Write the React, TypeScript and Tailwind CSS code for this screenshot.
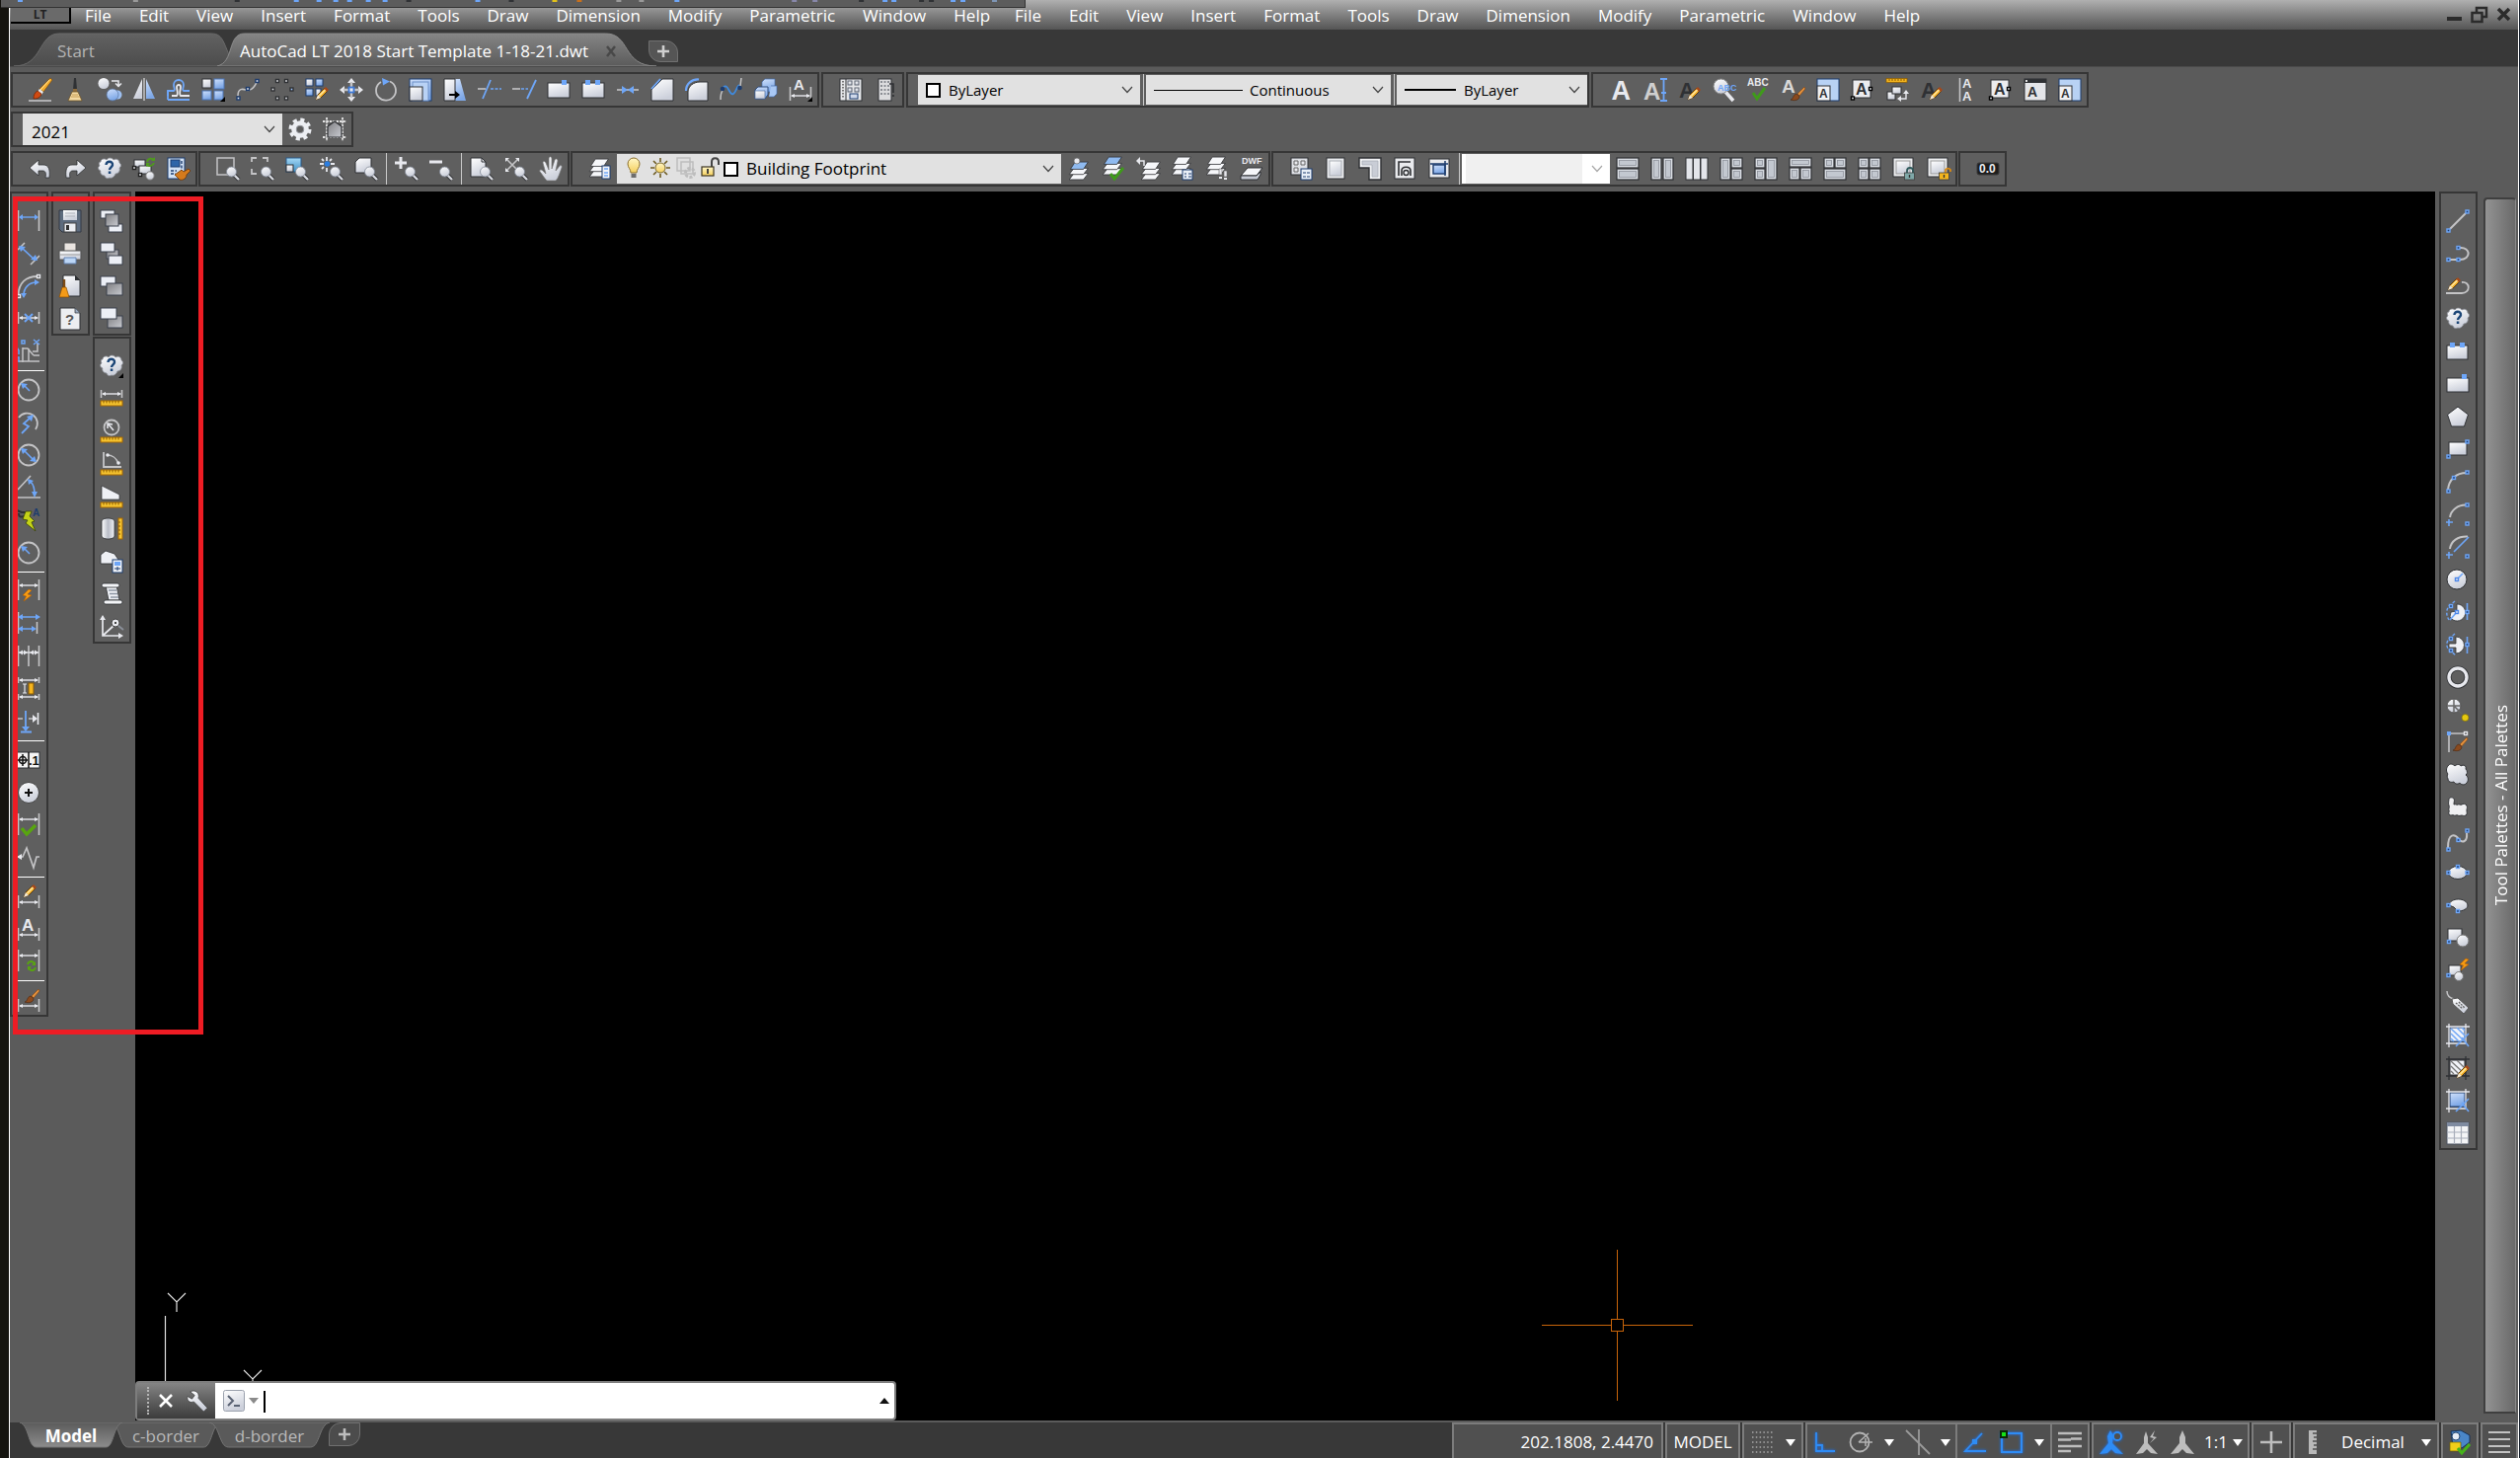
import React, { type ReactNode } from "react";

const W = "#e8e9ee";
const G = "#c4c4c6";
const B = "#6ea6f8";
const N = "#1d3c6e";
const K = "#2f3134";
const GW = "url(#gw)";
const GB = "url(#gb)";
const GY = "url(#gy)";

/* ---------- shared drawing parts (24 x 24 grid) ---------- */

const Box = ({ x, y, w, h, f = GW, s = K }: { x: number; y: number; w: number; h: number; f?: string; s?: string }) => (
  <rect x={x} y={y} width={w} height={h} fill={f} stroke={s} />
);
const Line = ({ d, s = G, w = 2 }: { d: string; s?: string; w?: number }) => (
  <path d={d} fill="none" stroke={s} strokeWidth={w} />
);
const Node = ({ x, y, s = B, f = N }: { x: number; y: number; s?: string; f?: string }) => (
  <rect x={x - 1.5} y={y - 1.5} width={3} height={3} fill={f} stroke={s} strokeWidth={1.4} />
);
const Mag = () => (
  <g>
    <path d="M18 18l5 5" stroke={K} strokeWidth={4} />
    <path d="M18 18l5 5" stroke="#d7d9df" strokeWidth={2.4} />
    <circle cx={15.5} cy={15} r={5} fill={GW} stroke="#7f8794" strokeWidth={0.8} />
  </g>
);
const Ruler = ({ y = 16 }: { y?: number }) => (
  <g>
    <rect x={1} y={y} width={22} height={5} fill="#f6c430" stroke="#a96a00" />
    <path d={`M4 ${y}v2.500M7 ${y}v2.500M10 ${y}v2.500M13 ${y}v2.500M16 ${y}v2.500M19 ${y}v2.500`} stroke="#8a5a00" />
  </g>
);
const Pencil = ({ x = 0, y = 0 }: { x?: number; y?: number }) => (
  <g transform={`translate(${x} ${y})`}>
    <path d="M1 13l2-5 7-7 3 3-7 7z" fill="#f7b52c" stroke="#5a3a14" />
    <path d="M9 2l2-2 3 3-2 2z" fill="#a5481a" />
    <path d="M1 13l2-5 3 3z" fill="#f2ead8" />
    <path d="M4.500 9l6-6" stroke="#ffe9a8" strokeWidth={1.2} />
  </g>
);
const Brush = ({ x = 0, y = 0 }: { x?: number; y?: number }) => (
  <g transform={`translate(${x} ${y})`}>
    <path d="M14 0l-7 7 2 2 6-7z" fill="#e3903c" stroke="#7d4313" strokeWidth={0.6} />
    <path d="M0 13c3 0 2-5 6-6l3 2.500c0 4-5 5-9 3.500z" fill="#8a4a1e" stroke="#4c250b" strokeWidth={0.6} />
  </g>
);
const Cloud = () => (
  <g>
    <path d="M3 5c0-3 4-4 6-2 2-3 6-2 7 0 3-2 6 0 6 3 2 1 2 4 0 5 1 3-1 6-4 6-1 3-4 5-6 4-2 1-4 1-5-2-3 0-5-3-4-5-3-1-3-4-1-5-1-2-1-4 1-4z" fill={GW} stroke="#8e929b" strokeWidth={0.800} />
    <path d="M8.500 8c0-4.500 7-4 6.500 0-.3 2.300-2.900 2.400-3 5" fill="none" stroke="#1c4677" strokeWidth={2.400} />
    <rect x={10.800} y={14.500} width={2.500} height={2.500} fill="#1c4677" />
  </g>
);
const Bolt = ({ x = 0, y = 0, f = "#f59a12" }: { x?: number; y?: number; f?: string }) => (
  <path transform={`translate(${x} ${y})`} d="M7 0L1 6l3.500 1L2 12l8-6-4-1 4-4z" fill={f} stroke="#b65d00" strokeWidth={0.6} />
);
const Dim = ({ y = 6, top = 1, h = 12, s = G, a = W, r = 2 }: { y?: number; top?: number; h?: number; s?: string; a?: string; r?: number }) => (
  <g>
    <path d={`M1.500 ${top}v${h}M22.500 ${top}v${h}`} stroke={s} strokeWidth={1.6} />
    <path d={`M3 ${y}H21`} stroke={a} strokeWidth={1.4} />
    <path d={`M2 ${y}l4-${r}v${r * 2}zM22 ${y}l-4-${r}v${r * 2}z`} fill={a} />
  </g>
);
const Layers = ({ x = 0, y = 0, top = "#f6f7fa" }: { x?: number; y?: number; top?: string }) => (
  <g transform={`translate(${x} ${y}) scale(1.2 1.05)`} stroke={K} strokeWidth={0.7}>
    <path d="M5 13h12l-4 6H1z" fill="#f6f7fa" />
    <path d="M5 8h12l-4 6H1z" fill="#f6f7fa" />
    <path d="M6 2h11l-4 7H2z" fill={top} />
  </g>
);
const T = ({ x, y, size, f = W, children }: { x: number; y: number; size: number; f?: string; children: ReactNode }) => (
  <text x={x} y={y} fontSize={size} fontWeight={700} fill={f} fontFamily="Liberation Sans, sans-serif">{children}</text>
);
const Card = ({ x, y, w = 12, h = 9, f = "#eceff6" }: { x: number; y: number; w?: number; h?: number; f?: string }) => (
  <rect x={x} y={y} width={w} height={h} fill={f} stroke="#3b414c" />
);
const Pane = ({ x, y, w, h }: { x: number; y: number; w: number; h: number }) => (
  <g>
    <rect x={x} y={y} width={w} height={h} fill="#d9dde3" stroke={K} strokeWidth={1.2} />
    <rect x={x + 2.5} y={y + 2.5} width={w - 5} height={h - 5} fill="#c3c8d0" stroke="#8d929b" strokeWidth={0.8} />
  </g>
);
const Lock = ({ body, open }: { body: string; open?: boolean }) => (
  <g>
    <path d={open ? "M19 16v-3a3 3 0 0 1 5 0v2" : "M15 17v-3a3 3 0 0 1 6 0v3"} fill="none" stroke={open ? "#d98a14" : "#2f5a5c"} strokeWidth={1.8} />
    <rect x={12.500} y={16} width={10} height={7} fill={body} stroke="#3d3d3d" strokeWidth={0.8} />
    <path d="M17.500 18v3" stroke="#333" strokeWidth={1.4} />
  </g>
);

/* ---------- icon drawings ---------- */

const icons: Record<string, ReactNode> = {
  erase: <><Line d="M0 23H23" w={1.600} /><path d="M22 0l2 2-9 12-4-3z" fill="#f4ad2d" stroke="#7b4a10" strokeWidth={0.700} /><path d="M21 2l-9 10" stroke="#ffe7a0" /><path d="M11 11l4 3-2 3-4-3z" fill="#e9e9e9" /><path d="M9 13l4 3c-1 4-4 5-8 5 0-4 1-6 4-8z" fill="#cf4a12" stroke="#6e1f00" strokeWidth={0.700} /></>,
  purge: <><path d="M11 0h2l1 12h-4z" fill={K} /><path d="M10 11h4v4h-4z" fill="#8c6a3c" /><path d="M9 14h6l4 9H5z" fill="#f3d9a2" stroke="#6d5327" strokeWidth={0.800} /><path d="M9 17h6M8 19h9" stroke="#c79d55" /></>,
  copy: <><circle cx={6} cy={5.500} r={5.500} fill={GW} /><path d="M14 3h7v5M18 5.500l3 3 3-3" fill="none" stroke={W} strokeWidth={1.500} /><circle cx={20} cy={17} r={4.500} fill="#9dbff0" /><circle cx={15} cy={17} r={6} fill={GB} stroke="#54719e" strokeWidth={0.700} /></>,
  mirror: <><path d="M10 1v20H1z" fill={GW} /><path d="M14 1v20h9z" fill={GB} /><path d="M12 0v23" stroke={G} strokeWidth={1.500} /></>,
  offset: <><path d="M1 22h22M1 18v-5h6c2-1 0-3 0-6a5 5 0 0 1 10 0c0 3-2 5 0 6h6" fill="none" stroke={B} strokeWidth={1.800} /><path d="M1 13v9" stroke={B} strokeWidth={1.800} /><path d="M5 18h5c2-2 0-6 0-9a2 2 0 0 1 4 0c0 3-2 7 0 9h9" fill="none" stroke={W} strokeWidth={1.800} /></>,
  array: <><Box x={1} y={1} w={9} h={9} /><Box x={13} y={1} w={10} h={10} f={GB} s="#4c76b8" /><Box x={1} y={13} w={9} h={9} f={GB} s="#4c76b8" /><Box x={13} y={13} w={9} h={9} f={GB} s="#4c76b8" /><path d="M24 19v5h-5z" fill="#000" /></>,
  arraypath: <><Line d="M2 18c0-8 5-7 8-6s8 0 11-8" w={1.600} /><Node x={2.500} y={20.500} f={W} s={N} /><Node x={12} y={11} f={W} s={N} /><Node x={21.500} y={3} f={W} s={N} /></>,
  arraypolar: <><Node x={7} y={3} f={W} s={K} /><Node x={16} y={3} f={W} s={K} /><Node x={2.500} y={11.500} f={W} s={K} /><Node x={21.500} y={11.500} f="#9cc4ff" s={K} /><Node x={7} y={20.500} f={W} s={K} /><Node x={16} y={20.500} f={W} s={K} /></>,
  arrayedit: <><Box x={1} y={1} w={7} h={7} s={N} /><Box x={11} y={1} w={7} h={7} f={GB} s={N} /><Box x={1} y={11} w={7} h={7} f={GB} s={N} /><Box x={11} y={11} w={5} h={7} s={N} /><Pencil x={10} y={9} /></>,
  move: <><path d="M12 0l4 5h-8zM12 24l4-5h-8zM0 12l5-4v8zM24 12l-5-4v8z" fill={W} /><path d="M12 4v16M4 12h16" stroke={G} strokeWidth={2.500} /><rect x={9.500} y={9.500} width={5} height={5} fill={W} stroke="#3d78d6" strokeWidth={1.800} /></>,
  rotate: <><path d="M7 4a10 10 0 1 0 9-.500" fill="none" stroke={G} strokeWidth={1.800} /><path d="M8 0l8 3.500-7 4z" fill={B} /></>,
  scale: <><Box x={1} y={1} w={22} h={22} f={GB} s={N} /><Box x={4} y={4} w={16} h={19} f="#b9d2f5" s="#6c8fc6" /><Box x={1} y={9} w={13} h={14} f={GW} /></>,
  stretch: <><path d="M12 1h5l6 22H12z" fill={GB} /><path d="M1 1h11v22H1z" fill={GW} stroke={K} /><path d="M6 17h9" stroke="#000" strokeWidth={2} /><path d="M17 17l-5-4v8z" fill="#000" /></>,
  trim: <><Line d="M0 11h8" w={1.600} /><path d="M5 21L13 2" stroke={B} strokeWidth={1.800} /><path d="M13 11h11" stroke={B} strokeWidth={1.600} strokeDasharray="3 1.500" /></>,
  extend: <><Line d="M0 11h8" w={1.600} /><path d="M9 11h7" stroke={B} strokeWidth={1.600} strokeDasharray="3 1.500" /><path d="M15 21L24 2" stroke={B} strokeWidth={1.800} /></>,
  breakpoint: <><Box x={1} y={5} w={22} h={15} /><rect x={15} y={2} width={5} height={5} fill={B} /></>,
  break: <><Box x={1} y={5} w={22} h={15} /><rect x={4} y={2} width={5} height={5} fill={B} /><rect x={14} y={2} width={5} height={5} fill={B} /></>,
  join: <><path d="M1 12h22" stroke={G} strokeWidth={1.600} /><path d="M6 8l6 4-6 4zM18 8l-6 4 6 4z" fill={B} /></>,
  chamfer: <><path d="M1 23V12L12 1h11v22z" fill={GW} stroke={K} /><path d="M1 11L10 1" stroke={B} strokeWidth={1.800} /></>,
  fillet: <><path d="M3 23V14C3 8 9 4 15 4h8v19z" fill={GW} stroke={K} /><path d="M1 13C1 6 7 1 14 1.500" fill="none" stroke={B} strokeWidth={2.200} /></>,
  blend: <><Line d="M1 22c0-5 1-8 2-9" w={1.500} /><path d="M3 11c5-9 7 8 11 5 3-2 3-7 6-9" fill="none" stroke="#3f8be0" strokeWidth={1.800} /><Line d="M21 8l1-8" w={1.500} /><circle cx={3} cy={11} r={2.300} fill={N} /><circle cx={20.500} cy={10} r={2.300} fill={N} /></>,
  explode: <><path d="M8 4l3-3h10v10l-3 3H8z" fill={GB} stroke="#466fae" strokeWidth={0.700} /><path d="M1 12l3-3h10v8l-3 4H1z" fill={GB} stroke="#2e4c7c" /><path d="M1 13h10v8H1z" fill={GW} stroke="#54719e" strokeWidth={0.700} /><path d="M17 8h6v8l-3 3h-5" fill="#a9c8f4" stroke="#466fae" strokeWidth={0.700} /></>,
  dimtext: <><T x={5} y={12} size={15}>A</T><Dim y={18} top={9} h={14} /><path d="M24 19v5h-5z" fill="#000" /></>,
  sheet: <><Box x={1} y={1} w={22} h={22} f="#e6e7ea" /><path d="M4 3v18" stroke="#777" strokeDasharray="1.500 1.500" strokeWidth={2} /><path d="M7 1v22" stroke={K} /><Box x={9} y={3} w={4} h={4} s="#5b6370" /><Box x={16} y={3} w={4} h={4} s="#5b6370" /><Box x={9} y={10} w={4} h={4} s="#5b6370" /><Box x={16} y={10} w={4} h={4} s="#5b6370" /><Box x={11} y={16} w={8} h={5} s={N} f="#cfd8ea" /></>,
  sheet2: <><Box x={5} y={1} w={13} h={22} f="#dcdcde" /><path d="M7 4h9M7 8h9M7 12h9M7 16h9" stroke="#8b8e94" strokeWidth={2} strokeDasharray="2 1.500" /><path d="M16 6h4v9M20 17v2" stroke={K} fill="none" strokeWidth={1.600} /></>,
  textA: <T x={2.500} y={22} size={27}>A</T>,
  textI: <><T x={0} y={22} size={24} f="#cfcfcf">A</T><path d="M20.500 1v22M17 1h7M17 23h7M18 15h5" stroke={B} strokeWidth={1.800} /></>,
  textedit: <><T x={1} y={20} size={22} f={K}>A</T><Pencil x={9} y={9} /></>,
  find: <><path d="M13 14l8 9" stroke={W} strokeWidth={3.500} /><circle cx={8.500} cy={8.500} r={7.500} fill={GW} stroke="#888" /><T x={5} y={13} size={9} f={B}>ABC</T></>,
  spell: <><T x={0} y={8} size={10}>ABC</T><path d="M6 15l4 6 8-11" fill="none" stroke="#3f9a1b" strokeWidth={3} /></>,
  style: <><T x={0} y={15} size={19} f="#d8d8d8">A</T><Brush x={9} y={9} /></>,
  textscale: <><Box x={1} y={1} w={22} h={22} f="#b8d2f4" s={N} /><Box x={1} y={8} w={13} h={15} f="#f0f1f3" /><T x={3} y={20} size={12} f={K}>A</T></>,
  justify: <><Box x={2} y={2} w={18} h={18} f="#ececef" /><T x={5} y={17} size={16} f={K}>A</T><Node x={2} y={20.500} s="#000" f={W} /><Node x={20} y={11} s="#000" f={W} /></>,
  convert: <><rect x={1} y={0.500} width={21} height={4} fill="#f3b51e" stroke="#8a5a00" strokeWidth={0.700} /><path d="M4 1v2M7 1v2M10 1v2M13 1v2M16 1v2M19 1v2" stroke="#8a5a00" /><Box x={2} y={14} w={8} h={8} /><Box x={7} y={9} w={9} h={7} /><path d="M15 21h6v-6" fill="none" stroke={W} strokeWidth={1.400} /><path d="M21 12l-3 4h6zM12 21l4-3v6z" fill={W} /></>,
  columnA: <><path d="M5.500 0v24" stroke={G} strokeWidth={1.600} /><T x={8} y={10} size={13}>A</T><T x={8} y={23} size={13}>A</T></>,
  windowA: <><Box x={1} y={1} w={22} h={22} f="#e4e5e8" /><rect x={1} y={1} width={22} height={4} fill={K} /><rect x={2} y={2} width={2} height={2} fill="#ddd" /><T x={4} y={19} size={14} f={K}>A</T></>,
  gear: <><circle cx={12} cy={12} r={9.500} fill="none" stroke="#eceef2" strokeWidth={4} strokeDasharray="4 3.460" /><circle cx={12} cy={12} r={6.300} fill="none" stroke="#eceef2" strokeWidth={5} /><circle cx={12} cy={12} r={3.800} fill="#5b5b5b" stroke="#9a9da4" /></>,
  wsbox: <><path d="M4 0v24M20 0v24M0 4h24M0 20h24" stroke="#e4e4e4" strokeWidth={1.800} strokeDasharray="2.400 1" /><path d="M5 20V9l7-5 7 5v11z" fill="url(#gg)" stroke={K} strokeWidth={1.200} /></>,
  undo: <path d="M1 11l9-8v5h5c5 0 7 4 6 13h-4c1-5 0-7-3-7h-4v5z" fill={GW} stroke={K} strokeWidth={0.800} />,
  redo: <path d="M23 11l-9-8v5H9c-5 0-7 4-6 13h4c-1-5 0-7 3-7h4v5z" fill={GW} stroke={K} strokeWidth={0.800} />,
  cloud: <Cloud />,
  cloudmore: <><Cloud /><path d="M24 19v5h-5z" fill="#000" /></>,
  refresh: <><Box x={2} y={3} w={11} h={7} /><Box x={7} y={9} w={12} h={8} /><circle cx={18} cy={19} r={4.200} fill={GW} stroke="#777" /><Node x={2} y={11} f={W} s="#222" /><Node x={8} y={18} f={W} s="#222" /><path d="M15 5c1-4 5-4 7-2M22 6c-1 3-5 4-7 2" fill="none" stroke="#4f9c1c" strokeWidth={1.800} /><path d="M23 0v4h-4zM14 10V6h4z" fill="#4f9c1c" /></>,
  properties: <><Box x={1} y={1} w={17} h={21} f="#d3e2f5" s={N} /><rect x={4} y={3} width={9} height={7} fill="#2e65a8" stroke={N} /><path d="M15 4v12M4 14h6M4 17h5" stroke={N} strokeWidth={1.400} strokeDasharray="3 1.500" /><path d="M8 18l7-5 2 2 5-3 2 2-4 4c0 4-4 6-7 5z" fill="#d47a1c" stroke="#6c3505" strokeWidth={0.800} /></>,
  zoomwin: <><Line d="M1 1h17v17H1z" w={1.500} /><Mag /></>,
  zoomdyn: <><Line d="M1 5V1h5M12 1h5v4M1 12v5h5" w={1.800} /><Mag /></>,
  zoomscale: <><Box x={1} y={1} w={15} h={14} f="url(#gs)" s="#2b5a8a" /><Box x={1} y={8} w={7} h={7} /><Mag /></>,
  zoomcenter: <><path d="M7 0v4M7 11v4M0 7h4M11 7h4M2 2l2 2M12 2l-2 2M2 12l2-2" stroke={W} strokeWidth={1.800} /><circle cx={7.500} cy={7} r={2.800} fill="#2a7de0" /><Mag /></>,
  zoomobj: <><path d="M1 5l4-4h12v11l-4 4H1z" fill={GW} stroke={K} /><Mag /></>,
  zoomin: <><path d="M6 0v12M0 6h12" stroke={W} strokeWidth={3} /><Mag /></>,
  zoomout: <><path d="M0 5h13" stroke={W} strokeWidth={3} /><Mag /></>,
  zoomall: <><path d="M1 1h11l4 4v15H1z" fill={GW} stroke={K} /><path d="M12 1v4h4" fill="none" stroke={K} /><Mag /></>,
  zoomext: <><path d="M2 2l12 12M14 2L2 14" stroke={G} strokeWidth={1.600} /><path d="M1 1h4l-4 4zM15 1h-4l4 4zM1 15v-4l4 4z" fill={W} /><Mag /></>,
  pan: <path d="M8 24c-3-3-5-7-7-9-1-2 1-3 3-1l3 3-3-11c0-2 2-2 3 0l3 7V2c0-3 3-3 3 0v10l3-9c1-2 3-1 3 1l-2 10 4-5c1-1 3 0 2 2-2 5-3 10-6 13z" fill={GW} stroke="#777" strokeWidth={0.700} />,
  layerprops: <><Layers x={0} y={0} /><Box x={14} y={9} w={8} h={13} f="#f1f3f8" s={N} /><path d="M16 12h4M16 16h4M16 19h4" stroke={B} strokeWidth={1.600} /></>,
  layercur: <><Layers x={1} y={3} top="#8fbaf0" /><circle cx={10} cy={4} r={3} fill={W} stroke="#666" strokeWidth={0.700} /></>,
  layerok: <><Layers x={0} y={-2} top="#8fbaf0" /><path d="M9 17l4 5 9-11" fill="none" stroke="#3f9a1b" strokeWidth={3} /></>,
  layerprev: <><Layers x={4} y={3} /><path d="M3 4h5v5" fill="none" stroke={W} strokeWidth={1.500} /><path d="M0 4l4-4v8z" fill={W} /></>,
  layerstate: <><Layers x={0} y={-2} /><Box x={12} y={13} w={10} h={10} f="#e9eef6" s={N} /><path d="M14 17h2M18 17h3M14 20h2M18 20h3" stroke={N} /></>,
  layerwalk: <><Layers x={0} y={-2} /><path d="M14 12h3v6h-3zM19 14h3v6h-3z" fill={W} stroke="#666" strokeWidth={0.600} /><path d="M14 20h3v2h-3zM19 21h3v2h-3z" fill={W} /></>,
  dwf: <><T x={2} y={7} size={9}>DWF</T><path d="M8 11h15l-6 8H1z" fill="#f6f7fa" stroke={K} /><path d="M1 19h16l4-4v3l-3 5H1z" fill="#c6cad4" stroke={K} /></>,
  vpdialog: <><Box x={2} y={1} w={17} h={17} f="#dfe1e6" /><path d="M5 4h4v4H5zM12 4h4v4h-4zM5 11h4v4H5z" fill={W} stroke="#666" /><Box x={12} y={12} w={11} h={11} f="#eaf0f8" s={N} /><path d="M14 16h3M18 16h3M14 20h3M18 20h3" stroke={N} /></>,
  vpsingle: <><Box x={3} y={1} w={18} h={21} f="#e9eaed" /><rect x={6} y={4} width={12} height={15} fill={GW} stroke="#a9adb5" /></>,
  vppoly: <><path d="M1 1h22v22H11V11H1z" fill="#f0f1f4" stroke={K} strokeWidth={1.400} /><path d="M4 4h16v16h-6V8H4z" fill="#c9cdd6" stroke="#a4a9b3" strokeWidth={0.700} /></>,
  vpobject: <><Box x={2} y={1} w={20} h={21} f="#e9eaed" /><path d="M6 19V5h12M9 19v-5c0-5 9-5 9 0v5" fill="none" stroke={K} strokeWidth={1.600} /><circle cx={13.500} cy={16} r={2.500} fill="none" stroke={K} strokeWidth={1.400} /></>,
  vpclip: <><Box x={2} y={2} w={20} h={19} f="#e9eaed" /><rect x={6} y={8} width={12} height={9} fill={GB} stroke={N} strokeWidth={1.400} /><path d="M3 7h18M18 4v15" stroke={N} strokeWidth={1.500} /></>,
  vp2h: <><Pane x={1} y={1} w={22} h={10} /><Pane x={1} y={12} w={22} h={11} /></>,
  vp2v: <><Pane x={1} y={1} w={10} h={22} /><Pane x={13} y={1} w={10} h={22} /></>,
  vp3v: <><Box x={1} y={1} w={7} h={22} f="#e3e5ea" /><Box x={8.500} y={1} w={7} h={22} f="#e3e5ea" /><Box x={16} y={1} w={7} h={22} f="#e3e5ea" /></>,
  vp3l: <><Pane x={1} y={1} w={10} h={22} /><Pane x={12} y={1} w={11} h={10} /><Pane x={12} y={12} w={11} h={11} /></>,
  vp3r: <><Pane x={1} y={1} w={10} h={10} /><Pane x={1} y={12} w={10} h={11} /><Pane x={12} y={1} w={11} h={22} /></>,
  vp3t: <><Pane x={1} y={1} w={22} h={9} /><Pane x={1} y={11} w={10} h={12} /><Pane x={12} y={11} w={11} h={12} /></>,
  vp3b: <><Pane x={1} y={1} w={10} h={10} /><Pane x={12} y={1} w={11} h={10} /><Pane x={1} y={12} w={22} h={11} /></>,
  vp4: <><Pane x={1} y={1} w={10} h={10} /><Pane x={12} y={1} w={11} h={10} /><Pane x={1} y={12} w={10} h={11} /><Pane x={12} y={12} w={11} h={11} /></>,
  vplock: <><Box x={1} y={1} w={20} h={19} f="#edeef0" /><rect x={4} y={4} width={14} height={13} fill={GW} stroke="#999" /><Lock body="#7fa8a8" /></>,
  vpunlock: <><Box x={1} y={1} w={20} h={19} f="#edeef0" /><rect x={4} y={4} width={14} height={13} fill={GW} stroke="#999" /><Lock body="#f3b51e" open /></>,
  zerozero: <><rect x={1} y={6} width={22} height={12} rx={2} fill="#1d1d1d" stroke="#3a3a3a" /><T x={3} y={16} size={12}>0.0</T></>,

  dimlinear: <Dim y={8} top={1} h={21} a={B} r={3} />,
  dimaligned: <><path d="M1 8l7-7M14 23l9-9" stroke={G} strokeWidth={1.600} /><path d="M4 5l15 14" stroke={B} strokeWidth={1.600} /><path d="M2 4l7 1-5 5zM21 19l-7-1 5-5z" fill={B} /></>,
  dimarc: <><Line d="M1.500 21C2 9 9 2 21 2" w={1.800} /><path d="M7 21C7 14 12 8 20 8" fill="none" stroke={B} strokeWidth={1.600} /><path d="M23 8l-5-3v6zM7 24l-3-5h6z" fill={B} /><Node x={22} y={2} s={W} f="#555" /><Node x={2} y={22} s={W} f="#555" /></>,
  dimordinate: <><Dim y={11} top={5} h={12} /><path d="M8 7l8 8M16 7l-8 8" stroke={B} strokeWidth={2} /></>,
  dimjogged: <><path d="M6 8v15M2 22h21M6 9h5l6 7M12 9v13M17 16h6M16 12h5V3" fill="none" stroke={G} strokeWidth={1.500} /><path d="M5 1h3v3H5zM0 8l2 3v4M17 0l6 5M23 0l-6 5M0 18h2v4H0z" fill="none" stroke={B} strokeWidth={1.500} /></>,
  dimradius: <><circle cx={12} cy={12} r={10.500} fill="none" stroke={G} strokeWidth={1.800} /><path d="M13 13L7 7" stroke={B} strokeWidth={1.600} /><path d="M4 5l7 1-5 5z" fill={B} /></>,
  dimjog: <><path d="M2 7a10 10 0 1 1 17 12" fill="none" stroke={G} strokeWidth={1.800} /><path d="M5 23l7-7-5-3 8-7" fill="none" stroke={B} strokeWidth={1.800} /><path d="M17 4l-7 2 5 5z" fill={B} /></>,
  dimdiameter: <><circle cx={12} cy={12} r={10.500} fill="none" stroke={G} strokeWidth={1.800} /><path d="M6 6l12 12" stroke={B} strokeWidth={1.600} /><path d="M4 5l7 1-5 5zM20 19l-7-1 5-5z" fill={B} /></>,
  dimangle: <><Line d="M14 0L1 14M0 22H24" w={1.600} /><path d="M14 6c3 3 4 7 4 12" fill="none" stroke={B} strokeWidth={1.600} /><path d="M11 3l6 2-5 4zM18 22l-3-6h6z" fill={B} /></>,
  quickdim: <><path d="M0 2l5 2h8M2 5c0 4 2 4 5 3" stroke={K} fill="none" strokeWidth={2} /><path d="M9 3L6 11l5 1-2 3 10 8-4-9 3-1-5-5 2-5z" fill="#c5d317" stroke="#39420a" strokeWidth={0.800} /><T x={16} y={8} size={10} f={N}>A</T></>,
  dimcont: <><Dim y={6} top={0} h={21} /><Bolt x={5} y={10} /></>,
  dimbase: <><path d="M1.500 0v22M20.500 10v12" stroke={G} strokeWidth={1.600} /><path d="M2 5h20M2 17h16" stroke={B} strokeWidth={1.600} /><path d="M24 5l-5-3v6zM1 5l5-3v6zM20 17l-5-3v6zM1 17l5-3v6z" fill={B} /></>,
  dimcontinue: <><path d="M1.500 1v21M12 1v21M22.500 1v21" stroke={G} strokeWidth={1.600} /><path d="M2 8h20" stroke={W} strokeWidth={1.200} /><path d="M2 8l4-2.500v5zM11 8L7 5.500v5zM13 8l4-2.500v5zM22 8l-4-2.500v5z" fill={W} /></>,
  dimspace: <><Dim y={3} top={0} h={6} /><Dim y={20} top={17} h={6} /><path d="M8 7v9M6 7h4M6 16h4" stroke={W} strokeWidth={1.200} /><rect x={12} y={6} width={5} height={11} fill="#f6b51e" stroke="#8a5a00" /></>,
  dimbreak: <><path d="M0 9h6M12 9h8" stroke={G} strokeWidth={1.600} /><path d="M21.500 3v12" stroke={W} strokeWidth={1.600} /><path d="M21 9l-5-4v8z" fill={W} /><path d="M9 1v20M4 22.500h11" stroke={B} strokeWidth={1.800} /><path d="M9 22l-4-5h8z" fill={B} /></>,
  tolerance: <><rect x={0} y={4} width={23} height={16} fill="#f4f4f4" stroke={K} /><path d="M12 4v16M6 6v12M1 12h10" stroke="#111" strokeWidth={1.500} /><circle cx={6} cy={12} r={3.500} fill="none" stroke="#111" strokeWidth={1.500} /><T x={12} y={17} size={13} f="#111">.1</T></>,
  centermark: <><circle cx={12} cy={12} r={10.500} fill={GW} stroke="#444" /><path d="M12 8v8M8 12h8" stroke="#111" strokeWidth={2} /></>,
  inspect: <><Dim y={6} top={0} h={22} /><path d="M5 15l5 6 9-9" fill="none" stroke="#58a50f" strokeWidth={3.500} /></>,
  jogline: <><Line d="M1 11h5l4-9 7 20 3-11h3" w={1.700} /><path d="M0 11l5-3v6z" fill={W} /></>,
  dimedit: <><Dim y={18} top={11} h={13} /><Pencil x={6} y={0} /></>,
  dimtextedit: <><T x={5} y={14} size={17}>A</T><Dim y={18} top={11} h={13} /></>,
  dimupdate: <><Dim y={6} top={0} h={22} /><path d="M11 15c1-4 6-4 7 0M19 18c-1 4-6 4-7 0" fill="none" stroke="#58a50f" strokeWidth={1.800} /><path d="M19 12v4h-4zM11 21v-4h4z" fill="#58a50f" /></>,
  dimstyle: <><Dim y={18} top={11} h={13} /><Brush x={8} y={1} /></>,

  save: <><path d="M1 1h22v22H4l-3-3z" fill="#5d6b7d" stroke="#343b46" /><rect x={5} y={1} width={14} height={10} fill={GW} /><path d="M7 4h10M7 7h10" stroke="#aeb2ba" /><rect x={6} y={14} width={12} height={9} fill="#eceef2" stroke="#444" /><rect x={8} y={16} width={3} height={5} fill="#333" /></>,
  print: <><path d="M6 1h12v9H6z" fill="#e9e4e0" stroke="#555" /><path d="M1 9h22v9H1z" fill={GW} stroke="#555" strokeWidth={1.200} /><path d="M2 13h20" stroke="#999" /><path d="M6 16h12v6H6z" fill="#bcd6f6" stroke="#6484b4" /></>,
  cleandoc: <><path d="M5 1h12l5 5v16H5z" fill={GW} stroke={K} /><path d="M17 1v5h5" fill={K} /><path d="M6 5v8" stroke="#7c4a14" strokeWidth={2.400} /><path d="M4 13h4l3 10H1z" fill="#f39a18" stroke="#8a4c00" strokeWidth={0.700} /></>,
  helpdoc: <><path d="M2 1h15l5 5v17H2z" fill="#eceef1" stroke={K} /><path d="M17 1v5h5" fill="#9aaabf" stroke={K} strokeWidth={0.700} /><T x={7} y={18} size={15} f="#555">?</T></>,
  front: <><Card x={1} y={1} w={14} h={8} /><Card x={9} y={15} w={14} h={8} /><Card x={6} y={5} w={13} h={12} f="url(#gg)" /></>,
  back: <><Card x={7} y={8} w={12} h={9} f="url(#gg)" /><Card x={1} y={1} w={14} h={9} /><Card x={9} y={14} w={14} h={9} /></>,
  above: <><Card x={1} y={2} w={15} h={10} /><Card x={7} y={9} w={16} h={12} f="url(#gg)" /></>,
  under: <><Card x={8} y={9} w={15} h={12} f="url(#gg)" /><Card x={1} y={1} w={16} h={11} /></>,
  distance: <><Dim y={7} top={3} h={8} a={W} /><Ruler y={14} /></>,
  radius: <><circle cx={12} cy={8} r={7.500} fill="none" stroke={G} strokeWidth={1.800} /><path d="M14 11L9 5M8 9V4l5 1" fill="none" stroke={W} strokeWidth={1.500} /><Ruler y={18} /></>,
  angle: <><Line d="M4 0v15h18" w={1.800} /><Line d="M7 3c7 0 10 3 12 9" w={1.500} /><circle cx={8} cy={3} r={1.800} fill={W} /><circle cx={19} cy={11} r={1.800} fill={W} /><Ruler y={18} /></>,
  area: <><path d="M2 1l18 9v5H2z" fill="#eef0f5" stroke={K} strokeWidth={0.700} /><Ruler y={18} /></>,
  volume: <><path d="M2 4c0-4 13-4 13 0v15c0 4-13 4-13 0z" fill="url(#gc)" stroke={K} strokeWidth={0.800} /><rect x={19} y={1} width={4} height={21} fill="#f6c430" stroke="#a96a00" /><path d="M19 5h2M19 9h2M19 13h2M19 17h2" stroke="#8a5a00" /></>,
  massprop: <><path d="M1 14V5l5-4 9 3 4 6v4z" fill="#eef0f5" stroke={K} strokeWidth={0.800} /><Box x={13} y={10} w={10} h={13} f="#eef1f6" s={N} /><rect x={15} y={12} width={6} height={4} fill={B} /><path d="M15 19h6M18 17v4" stroke={N} /></>,
  list: <><path d="M6 3h11l3 15H9z" fill="#eef0f5" stroke={K} strokeWidth={0.800} /><rect x={2} y={1} width={18} height={4} rx={2} fill="#f4f5f8" stroke={K} strokeWidth={0.800} /><rect x={4} y={18} width={19} height={4} rx={2} fill="#f4f5f8" stroke={K} strokeWidth={0.800} /><path d="M9 8h8M10 11.500h8M11 15h8" stroke="#8d95a3" strokeWidth={1.600} /></>,
  locate: <><path d="M3 2v19h18M3 21L15 10" fill="none" stroke={W} strokeWidth={1.700} /><path d="M3 0L0 5h6zM24 21l-5-3v6z" fill={W} /><circle cx={16} cy={8} r={4} fill={W} stroke="#444" /><rect x={15} y={7} width={2} height={2} fill="#444" /><path d="M19 11l5 4" stroke="#8a8f98" strokeWidth={2} /></>,

  line: <><Line d="M4 20L20 4" /><Node x={2.500} y={21.500} /><Node x={21.500} y={2.500} /></>,
  pline: <><Line d="M3 18h11c12 0 11-13 0-12" /><Node x={2.500} y={18} /><Node x={12.500} y={18} /><Node x={12.500} y={6} /></>,
  mline: <><Line d="M0 19h16c9 0 9-12 0-11" w={1.800} /><Pencil x={1} y={3} /></>,
  rect2: <><Box x={1} y={6} w={21} h={14} /><rect x={4} y={3} width={5} height={5} fill={B} /><rect x={14} y={3} width={5} height={5} fill={B} /></>,
  rect1: <><Box x={1} y={6} w={22} h={14} /><rect x={16} y={2} width={5} height={5} fill={B} /></>,
  polygon: <path d="M12 2l10.500 8-4 12H5.500l-4-12z" fill={GW} stroke={K} />,
  rectangle: <><Box x={3} y={5} w={18} h={13} /><Node x={2.500} y={19.500} /><Node x={21.500} y={4.500} /></>,
  arc: <><Line d="M2 20C3 10 10 3 21 3" /><Node x={2.500} y={21.500} /><Node x={8} y={8} /><Node x={21.500} y={2.500} /></>,
  arc2: <><Line d="M4 15C5 8 12 2 21 2.500" /><Node x={21.500} y={2.500} /><Node x={21.500} y={21.500} /><path d="M3 17v7M0 20h7" stroke={B} strokeWidth={1.600} /></>,
  arc3: <><Line d="M4 14C5 6 12 1 22 1.500" /><path d="M8 17L23 2M3 17v7M0 20h7" stroke={B} strokeWidth={1.600} /><Node x={21.500} y={21.500} /></>,
  circle: <><circle cx={11} cy={12} r={10} fill={GW} stroke={K} /><path d="M11 12l6-6" stroke={B} strokeWidth={1.600} /><Node x={11} y={12} s="#4b86e8" f={W} /></>,
  circle2: <><path d="M11 4a8.500 8.500 0 1 1-7 13l1-5 6-1z" fill="#eef0f5" stroke={K} strokeWidth={0.800} /><path d="M21.500 3v17M11 12l-7 8" fill="none" stroke={B} strokeWidth={1.600} /><path d="M9 1L3 6C0 10 0 15 3 20" fill="none" stroke={B} strokeWidth={1.400} strokeDasharray="3 2" /><Node x={21.500} y={12} /><Node x={5} y={6} /><Node x={11} y={12} f={W} s="#4b86e8" /></>,
  circle3: <><path d="M10 4a8.500 8.500 0 1 1 0 17v-6H3v-4h7z" fill="#eef0f5" stroke={K} strokeWidth={0.800} /><path d="M21.500 4v17" stroke={B} strokeWidth={1.600} /><path d="M9 1L3 6C0 10 0 15 4 18l6 5" fill="none" stroke={B} strokeWidth={1.400} strokeDasharray="3 2" /><Node x={21.500} y={12} /><Node x={5} y={6} /><Node x={5} y={18} /></>,
  donut: <><circle cx={12} cy={12} r={9} fill="none" stroke={K} strokeWidth={5} /><circle cx={12} cy={12} r={9} fill="none" stroke={W} strokeWidth={3.400} /></>,
  donutsnap: <><circle cx={8} cy={8} r={7} fill={GW} stroke="#555" /><path d="M8 1v14M1 8h14M9 9l7 7" stroke="#666" strokeWidth={1.500} /><circle cx={19.500} cy={20} r={3.500} fill="#e5c810" stroke="#7a6900" strokeWidth={0.600} /></>,
  region: <><Line d="M3 3h17M3 3v19" w={1.600} /><rect x={1} y={1} width={4} height={4} fill={B} /><Node x={20} y={3} s={W} f="#555" /><Brush x={7} y={7} /></>,
  revcloud: <path d="M2 3c2-3 5-2 7 0 2-2 5-2 6 0 3-2 6 0 5 3 2 2 2 5 0 6 3 2 3 6 1 8-2 3-6 2-7 0-2 2-5 1-6-1-3 1-6 0-6-3 -1-2-1-4 0-5-2-2-2-6 0-8z" fill={GW} stroke={K} />,
  wipeout: <path d="M3 3c2-2 4-1 5 0 1 2 0 3 0 6 2-1 3 1 4 0s3 1 4 0 4-1 5 1 0 3 0 5 1 4-1 5-3 0-4 0-3 1-4 0-3 1-4 0-4 1-5-1 1-3 0-4 1-3 0-5 0-5 0-7z" fill="#f0f0f2" stroke={K} />,
  spline: <><Line d="M2 20C2 4 9 6 13 11s9 2 8-6" /><Node x={2.500} y={21.500} /><Node x={12.500} y={12} /><Node x={21.500} y={2.500} /></>,
  ellipse: <><ellipse cx={12} cy={12} rx={9.500} ry={6.500} fill={GW} stroke={K} /><Node x={2.500} y={12} /><Node x={21.500} y={12} /><Node x={12} y={6} /></>,
  ellipsearc: <><path d="M3 12c1-8 18-8 19 0 0 4-5 6-10 6l-4-4z" fill={GW} stroke={K} /><Node x={2.500} y={12} /><Node x={12} y={18} /></>,
  block: <><Box x={2} y={3} w={14} h={12} /><circle cx={17} cy={15} r={6} fill={GW} stroke="#777" /><Node x={3} y={16} /></>,
  makeblock: <><Box x={3} y={7} w={12} h={10} /><circle cx={13} cy={18} r={4.500} fill={GW} stroke="#777" /><Node x={2.500} y={17} /><Bolt x={13} y={0} /></>,
  tag: <><Line d="M1 0c0 5 3 7 7 8" w={1.500} /><path d="M6 8l6-1 11 10-5 6L7 13z" fill={GW} stroke="#555" /><path d="M10 12l7 6M13 11l6 6" stroke="#666" strokeWidth={1.400} strokeDasharray="2 1" /></>,
  hatch: <><rect x={4} y={4} width={15} height={14} fill="#f1f3f8" stroke={N} /><path d="M5 5l13 12M5 10l8 8M11 4l8 8M5 15l3 3M16 4l3 3" stroke={B} strokeWidth={1.500} /><path d="M3 0v24M20 0v20M0 3h24M0 20h20" stroke={W} strokeWidth={1.300} /><path d="M10 23L23 10M16 14l7 9" stroke={B} strokeWidth={1.600} /></>,
  hatchedit: <><rect x={4} y={4} width={15} height={15} fill="#f1f3f8" stroke={K} /><path d="M5 5l13 12M5 10l8 8M11 4l8 8M5 15l3 3" stroke="#777" strokeWidth={1.300} /><path d="M3 0v24M20 0v24M0 3h24M0 20h24" stroke={K} strokeWidth={1.300} /><Pencil x={10} y={9} /></>,
  gradient: <><rect x={4} y={4} width={15} height={14} fill={GB} stroke={N} /><path d="M3 0v24M20 0v20M0 3h24M0 20h20" stroke={W} strokeWidth={1.300} /><path d="M10 23L23 10M16 14l7 9" stroke={B} strokeWidth={1.600} /></>,
  table: <><rect x={1} y={1} width={22} height={22} fill="#f3f4f6" stroke="#4d5563" /><rect x={1} y={1} width={22} height={4} fill="#7f8ba0" /><path d="M8.500 5v18M15.500 5v18M1 11h22M1 17h22" stroke="#a8aeba" strokeWidth={1.200} /></>,

  grid: <path d="M2 2h21M2 7h21M2 12h21M2 17h21M2 22h21" stroke="#a6a6a6" strokeWidth={1.500} strokeDasharray="1.500 2.300" />,
  ortho: <g filter="url(#glow)"><path d="M3 2v19h19M3 15h6v6" fill="none" stroke="#2d8cf5" strokeWidth={1.800} /></g>,
  polar: <><circle cx={11} cy={12} r={9.500} fill="none" stroke="#b2b2b2" strokeWidth={1.800} /><path d="M10 12h14M10 12l10-9M17 8v8" fill="none" stroke="#b2b2b2" strokeWidth={1.500} /></>,
  iso: <path d="M0 0l24 24M13 -1v26" stroke="#9a9a9a" strokeWidth={1.800} />,
  otrack: <g filter="url(#glow)"><path d="M19 3L2 21h21" fill="none" stroke="#2d8cf5" strokeWidth={1.800} /><path d="M9 9h5v5H9z" fill="#2d8cf5" /></g>,
  osnap: <><g filter="url(#glow)"><rect x={3} y={3} width={20} height={19} fill="none" stroke="#2d8cf5" strokeWidth={2} /></g><rect x={1} y={0} width={8} height={8} fill="#0a2a08" /><rect x={3} y={2} width={4} height={4} fill="#17e217" /></>,
  lineweight: <path d="M0 3h24M0 9.500h13M0 16h24M0 21h13M13 8.500h11" stroke="#bdbdbd" strokeWidth={2.400} />,
  anno: <g filter="url(#glow)"><path d="M11 0l3 5-1 8 11 11-8-1-4-4-4 4-8 1L9 13 8 6z" fill="#2d8cf5" /><circle cx={18} cy={6} r={4} fill="#505050" stroke="#2d8cf5" strokeWidth={1.800} /></g>,
  annoauto: <><path d="M11 1l2 6v6l10 11-7-1-4-4-4 4-7 1 8-11V7z" fill="#bdbdbd" /><path d="M20 0l-5 7 4 1-4 5 7-6-4-1z" fill="#bdbdbd" /></>,
  annoscale: <path d="M12 0l3 7v6l9 11-8-1-4-4-4 4-8 1 9-11V7z" fill="#bdbdbd" />,
  plus: <path d="M12 1v22M1 12h22" stroke="#bdbdbd" strokeWidth={2.600} />,
  units: <><rect x={8} y={0} width={8} height={24} fill="#b9b9b9" /><path d="M12 3h4M13 7h3M12 11h4M13 15h3M12 19h4" stroke="#4f4f4f" strokeWidth={1.500} /></>,
  quickprops: <><path d="M3 1l10-1 9 5v7l-8 6-9-2z" fill="#4a86c8" stroke="#163258" /><circle cx={8} cy={6} r={4} fill="#e6edf5" stroke="#24466e" /><path d="M2 12h11v9H2z" fill="#f0cf1a" stroke="#6e5c00" strokeWidth={0.700} /><path d="M10 18l4 5 8-9" fill="none" stroke="#46b41a" strokeWidth={3} /></>,
  menu: <path d="M1 2h22M1 9h22M1 16h22M1 22h22" stroke="#c2c2c2" strokeWidth={2.200} />,
};

const Icon = ({ name }: { name: string }) => (
  <svg viewBox="0 0 24 24" className="size-6 shrink-0 overflow-visible" aria-hidden="true">
    {icons[name]}
  </svg>
);

/* ---------- controls ---------- */

const Tools = ({ names }: { names: string[] }) => (
  <>
    {names.map((n, i) => (
      <button key={n + i} type="button" aria-label={n} className="flex h-[33px] w-[35px] shrink-0 items-center justify-center">
        <Icon name={n} />
      </button>
    ))}
  </>
);

const Bar = ({ children }: { children: ReactNode }) => (
  <div role="toolbar" className="flex h-9 shrink-0 items-center border-2 border-[#363636] bg-[#5f5f5f] pl-2.5">
    {children}
  </div>
);

const Column = ({ children }: { children: ReactNode }) => (
  <div role="toolbar" aria-orientation="vertical" className="flex flex-col border-2 border-[#363636] bg-[#5f5f5f] pt-2.5 [&>button]:pt-0.5 [&>button]:pr-0.5">
    {children}
  </div>
);

const VSep = () => <span className="ml-[3px] mr-[2px] h-8 w-px bg-[#c9c9c9]" />;
const HSep = () => (
  <div className="flex h-1.5 items-end pb-px">
    <span className="ml-1 mr-0.5 h-px flex-1 bg-white" />
  </div>
);

const Combo = ({ label, value, box, pad, mark = "#444", children }: { label: string; value: string; box: string; pad: string; mark?: string; children?: ReactNode }) => (
  <div className={`relative flex shrink-0 items-center text-black ${box}`}>
    <select aria-label={label} defaultValue={value} className={`size-full appearance-none ${pad}`}>
      <option>{value}</option>
    </select>
    <span className="pointer-events-none absolute inset-y-0 left-2 flex items-center">{children}</span>
    <svg viewBox="0 0 12 8" className="pointer-events-none absolute right-[7px] h-2 w-3">
      <path d="M1 1l5 5.500L11 1" fill="none" stroke={mark} strokeWidth={1.200} />
    </svg>
  </div>
);

const Swatch = () => <span className="block size-[15px] border-2 border-black bg-white" />;

const menus = ["File", "Edit", "View", "Insert", "Format", "Tools", "Draw", "Dimension", "Modify", "Parametric", "Window", "Help"];

const Menus = () => (
  <>
    {menus.map((m) => (
      <button key={m} type="button">{m}</button>
    ))}
  </>
);

const MenuBar = () => (
  <header className="flex h-[30px] shrink-0 items-center bg-linear-to-b from-[#b0b0b0] to-[#555555] text-[17px] text-white">
    <button type="button" className="ml-px flex h-6 w-[61px] items-end justify-center self-start border-r-2 border-b-2 border-black bg-[#6a6a6a] pb-px text-xs leading-none font-bold text-[#222]">
      LT
    </button>
    <nav className="ml-3.5 flex gap-7 pt-0.5 leading-7"><Menus /></nav>
    <nav className="ml-[25px] flex gap-7 pt-0.5 leading-7"><Menus /></nav>
    <div className="ml-auto flex items-center gap-2 pr-1.5">
      <button type="button" aria-label="Minimize">
        <svg viewBox="0 0 16 18" className="h-[18px] w-4"><path d="M0 13h15" stroke="#2b2b2b" strokeWidth={4} /></svg>
      </button>
      <button type="button" aria-label="Restore">
        <svg viewBox="0 0 18 18" className="size-[18px]"><path d="M6 6V2h10v9h-4" fill="none" stroke="#2b2b2b" strokeWidth={2.500} /><rect x={1.500} y={7} width={10} height={9} fill="none" stroke="#2b2b2b" strokeWidth={2.500} /></svg>
      </button>
      <button type="button" aria-label="Close">
        <svg viewBox="0 0 16 16" className="size-4"><path d="M2 2l11 11M13 2L2 13" stroke="#2b2b2b" strokeWidth={3.500} /></svg>
      </button>
    </div>
  </header>
);

const FileTabs = () => (
  <div className="flex h-[38px] shrink-0 items-end border-b border-[#4a4a4a] bg-[#383838] text-[17px]">
    <button type="button" className="relative ml-1 flex h-[34px] w-[214px] items-center pt-1 pl-11 text-[#b4b4b4]">
      <svg viewBox="0 0 224 34" preserveAspectRatio="none" className="absolute inset-y-0 left-0 h-full w-[224px]">
        <path d="M0 34C30 34 24 1 46 1H200C214 1 212 14 224 34z" fill="url(#tab2)" stroke="#6a6a6a" />
      </svg>
      <span className="relative">Start</span>
    </button>
    <button type="button" className="relative flex h-[34px] w-[429px] items-center justify-between pt-1 pr-8 pl-[15px] text-white">
      <svg viewBox="0 0 450 34" preserveAspectRatio="none" className="absolute inset-y-0 -left-2 h-full w-[445px]">
        <path d="M0 34C18 30 10 1 28 1H398C424 1 414 34 450 34z" fill="url(#tab1)" stroke="#8a8a8a" />
      </svg>
      <span className="relative whitespace-nowrap">AutoCad LT 2018 Start Template 1-18-21.dwt</span>
      <svg viewBox="0 0 12 12" className="relative size-3"><path d="M2 1l8 10M10 1L2 11" stroke="#484848" strokeWidth={2.500} /></svg>
    </button>
    <button type="button" aria-label="New tab" className="mb-1 flex h-[22px] w-[30px] items-center justify-center rounded-tr-xl rounded-bl-xl border border-[#707070] bg-[#555555]">
      <svg viewBox="0 0 14 14" className="size-3.5"><path d="M7 1v12M1 7h12" stroke="#cfcfcf" strokeWidth={2.600} /></svg>
    </button>
  </div>
);

const modifyTools = ["erase", "purge", "copy", "mirror", "offset", "array", "arraypath", "arraypolar", "arrayedit", "move", "rotate", "scale", "stretch", "trim", "extend", "breakpoint", "break", "join", "chamfer", "fillet", "blend", "explode", "dimtext"];
const textTools = ["textA", "textI", "textedit", "find", "spell", "style", "textscale", "justify", "convert", "textedit", "columnA", "justify", "windowA", "textscale"];
const drawTools = ["line", "pline", "mline", "cloud", "rect2", "rect1", "polygon", "rectangle", "arc", "arc2", "arc3", "circle", "circle2", "circle3", "donut", "donutsnap", "region", "revcloud", "wipeout", "spline", "ellipse", "ellipsearc", "block", "makeblock", "tag", "hatch", "hatchedit", "gradient", "table"];

const Toolbars = () => (
  <div className="flex shrink-0 flex-col gap-1 pt-[5px] pb-[5px] pl-px">
    <div className="flex gap-0.5">
      <Bar><Tools names={modifyTools} /></Bar>
      <Bar><Tools names={["sheet", "sheet2"]} /></Bar>
      <Bar>
        <Combo label="Color" value="ByLayer" box="h-[30px] w-[225px] bg-[#e1e1e1] text-[15px]" pad="pl-[31px]"><Swatch /></Combo>
        <VSep />
        <Combo label="Linetype" value="Continuous" box="h-[30px] w-[248px] bg-[#e1e1e1] text-[15px]" pad="pl-[105px]"><span className="block h-px w-[90px] bg-black" /></Combo>
        <VSep />
        <Combo label="Lineweight" value="ByLayer" box="h-[30px] w-[193px] bg-[#e1e1e1] text-[15px]" pad="pl-[68px]"><span className="block h-0.5 w-[52px] bg-black" /></Combo>
      </Bar>
      <Bar><Tools names={textTools} /></Bar>
    </div>
    <div className="flex">
      <Bar>
        <Combo label="Workspace" value="2021" box="h-8 w-[263px] bg-[#e1e1e1] text-[17px]" pad="pl-[9px] pt-1.5" />
        <Tools names={["gear", "wsbox"]} />
      </Bar>
    </div>
    <div className="flex gap-px">
      <Bar><Tools names={["undo", "redo", "cloud", "refresh", "properties"]} /></Bar>
      <Bar>
        <Tools names={["zoomwin", "zoomdyn", "zoomscale", "zoomcenter", "zoomobj"]} />
        <VSep />
        <Tools names={["zoomin", "zoomout"]} />
        <VSep />
        <Tools names={["zoomall", "zoomext", "pan"]} />
      </Bar>
      <Bar>
        <Tools names={["layerprops"]} />
        <Combo label="Layer" value="Building Footprint" box="h-[30px] w-[450px] bg-[#e1e1e1] text-[17px]" pad="pl-[131px]">
          <span className="flex items-center gap-px">
            <svg viewBox="0 0 24 24" className="size-6"><path d="M6 16c0-4-3-5-3-9a6 6 0 0 1 12 0c0 4-3 5-3 9z" fill={GY} stroke="#8b6f2c" /><path d="M6.500 17h5v4h-5z" fill="#6d6d6d" /></svg>
            <svg viewBox="0 0 24 24" className="size-6"><path d="M11 1v4M11 17v4M1 11h4M17 11h4M4 4l3 3M15 15l3 3M4 18l3-3M15 7l3-3" stroke="#6d5a20" strokeWidth={1.600} /><circle cx={11} cy={11} r={5} fill={GY} stroke="#7b6728" /></svg>
            <svg viewBox="0 0 24 24" className="size-6"><path d="M3 1h13v13H3zM7 5h12v12H7z" fill="#e0e0e0" stroke="#bdbdbd" strokeWidth={1.500} /><circle cx={16} cy={16} r={4.500} fill="none" stroke="#bdbdbd" strokeWidth={3} strokeDasharray="3 1.500" /></svg>
            <svg viewBox="0 0 24 24" className="size-6"><path d="M13 10V5c0-5 7-5 7 0v3" fill="none" stroke="#444" strokeWidth={2} /><rect x={3} y={10} width={12} height={9} fill={GY} stroke="#3d3520" strokeWidth={1.200} /><path d="M9 12v5" stroke="#333" strokeWidth={1.800} /></svg>
            <Swatch />
          </span>
        </Combo>
        <Tools names={["layercur", "layerok", "layerprev", "layerstate", "layerwalk", "dwf"]} />
      </Bar>
      <Bar>
        <Tools names={["vpdialog", "vpsingle", "vppoly", "vpobject", "vpclip"]} />
        <VSep />
        <Combo label="Viewport scale" value="" box="h-[30px] w-[150px] bg-white text-[15px]" pad="m-1 mr-7 bg-[#f0f0f0]" mark="#a8a8a8" />
        <Tools names={["vp2h", "vp2v", "vp3v", "vp3l", "vp3r", "vp3t", "vp3b", "vp4", "vplock", "vpunlock"]} />
      </Bar>
      <Bar><Tools names={["zerozero"]} /></Bar>
    </div>
  </div>
);

const CommandLine = () => (
  <div className="absolute bottom-0 left-0 flex h-10 w-[771px] rounded border-2 border-[#7d7d7d] bg-white">
    <div className="flex w-[79px] shrink-0 items-center bg-linear-to-b from-[#858585] to-[#3c3c3c] pl-2.5">
      <span className="h-7 border-l-2 border-dotted border-[#b5b5b5]" />
      <button type="button" aria-label="Close command line" className="ml-2.5">
        <svg viewBox="0 0 14 14" className="size-3.5"><path d="M1 1l12 12M13 1L1 13" stroke="#fff" strokeWidth={2.600} /></svg>
      </button>
      <button type="button" aria-label="Customize" className="ml-3.5">
        <svg viewBox="0 0 24 24" className="size-[22px]"><path d="M4 2l5 4-3 4-5-3c-1 5 3 8 7 6l11 11 4-4L13 9c2-5-3-10-9-7z" fill={GW} stroke="#3b3b3b" strokeWidth={0.800} /></svg>
      </button>
    </div>
    <button type="button" aria-label="Recent commands" className="flex items-center gap-1 pl-2">
      <svg viewBox="0 0 22 22" className="size-[22px]"><rect x={0.500} y={0.500} width={21} height={21} rx={2} fill={GW} stroke="#9ba1ad" /><path d="M5 6l5 5-5 5" fill="none" stroke="#596273" strokeWidth={2} /><path d="M11 16h6" stroke="#596273" strokeWidth={2} /></svg>
      <svg viewBox="0 0 10 6" className="h-1.5 w-2.5"><path d="M0 0h10L5 6z" fill="#8a8a8a" /></svg>
    </button>
    <span className="mt-2 ml-[5px] h-[22px] w-0.5 shrink-0 bg-black" />
    <input aria-label="Command" className="min-w-0 flex-1 bg-transparent px-1 text-[17px] text-black outline-none" />
    <button type="button" aria-label="Command history" className="mr-[5px]">
      <svg viewBox="0 0 10 6" className="h-1.5 w-2.5"><path d="M0 6h10L5 0z" fill="#111" /></svg>
    </button>
  </div>
);

const Canvas = () => (
  <section aria-label="Drawing area" className="relative ml-1 flex-1 bg-black">
    <svg viewBox="0 0 153 153" className="absolute top-[1072px] left-[1425px] size-[153px]" shapeRendering="crispEdges">
      <path d="M76.500 0v70M76.500 83v70M0 76.500h70M83 76.500h70M70.500 70.500h12v12h-12z" fill="none" stroke="#c8640a" />
    </svg>
    <svg viewBox="0 0 100 92" className="absolute bottom-10 left-[29px] h-[92px] w-[100px]">
      <path d="M1.500 26v66M4 3l9 9 9-9M13 12v10" fill="none" stroke="#e2e2e2" strokeWidth={1.200} />
      <path d="M81 81l9 9 9-9M90 90v2" fill="none" stroke="#e2e2e2" strokeWidth={1.200} />
    </svg>
    <CommandLine />
  </section>
);

const Workspace = () => (
  <main className="relative flex flex-1">
    <div className="flex items-start gap-[3px]">
      <Column>
        <Tools names={["dimlinear", "dimaligned", "dimarc", "dimordinate", "dimjogged"]} />
        <HSep />
        <Tools names={["dimradius", "dimjog", "dimdiameter", "dimangle", "quickdim", "dimradius"]} />
        <HSep />
        <Tools names={["dimcont", "dimbase", "dimcontinue", "dimspace", "dimbreak"]} />
        <HSep />
        <Tools names={["tolerance", "centermark", "inspect", "jogline"]} />
        <HSep />
        <Tools names={["dimedit", "dimtextedit", "dimupdate"]} />
        <HSep />
        <Tools names={["dimstyle"]} />
      </Column>
      <Column><Tools names={["save", "print", "cleandoc", "helpdoc"]} /></Column>
      <div className="flex flex-col gap-px">
        <Column><Tools names={["front", "back", "above", "under"]} /></Column>
        <Column><Tools names={["cloudmore", "distance", "radius", "angle", "area", "volume", "massprop", "list", "locate"]} /></Column>
      </div>
    </div>
    <Canvas />
    <div className="ml-1 flex items-start">
      <Column><Tools names={drawTools} /></Column>
    </div>
    <button type="button" className="mt-1.5 mr-0.5 mb-[7px] ml-1.5 flex w-[33px] items-center justify-center rounded-t border-2 border-r border-[#3f3f3f] border-r-[#8a8a8a] bg-linear-to-r from-[#939393] to-[#6a6a6a] pl-0.5 text-[17px] text-white">
      <span className="rotate-180 whitespace-nowrap [writing-mode:vertical-rl]">Tool Palettes - All Palettes</span>
    </button>
    <div className="pointer-events-none absolute top-[5px] left-[3px] h-[849px] w-[193px] border-[5px] border-[#ee1c24]" />
  </main>
);

const Drop = ({ wide }: { wide?: boolean }) => (
  <button type="button" aria-label="More options" className={wide ? "flex w-[22px] justify-center" : "flex w-5 justify-center"}>
    <svg viewBox="0 0 10 7" className="h-[7px] w-2.5"><path d="M0 0h10L5 7z" fill="#fff" /></svg>
  </button>
);
const SBtn = ({ name, narrow }: { name: string; narrow?: boolean }) => (
  <button type="button" aria-label={name} className={narrow ? "flex w-[34px] items-center justify-center" : "flex w-9 items-center justify-center"}><Icon name={name} /></button>
);
const Cell = ({ children, joined }: { children: ReactNode; joined?: boolean }) => (
  <div className={`flex items-center border-t-2 border-r-2 border-[#7c7c7c] bg-[#505050] pt-0.5 ${joined ? "" : "ml-0.5 border-l-2"}`}>{children}</div>
);

const LayoutTab = ({ label, active, box }: { label: string; active?: boolean; box: string }) => (
  <button type="button" className={`relative flex h-[26px] items-center justify-center pt-0.5 ${box} ${active ? "z-10 font-bold text-white" : "text-[#b9b9b9]"}`}>
    <svg viewBox="0 0 100 26" preserveAspectRatio="none" className="absolute inset-y-0 -left-1.5 h-full w-[calc(100%+12px)]">
      <path d="M0 0C9 2 8 25 16 25H84C92 25 91 2 100 0z" fill={active ? "url(#tab3)" : "#5a5a5a"} stroke="#757575" vectorEffect="non-scaling-stroke" />
    </svg>
    <span className="relative">{label}</span>
  </button>
);

const Footer = () => (
  <footer className="flex h-[38px] shrink-0 border-t-2 border-[#5b5b5b] bg-[#383838] text-[17px] text-white">
    <nav className="ml-4 flex items-start">
      <LayoutTab label="Model" active box="w-[92px]" />
      <LayoutTab label="c-border" box="w-[100px]" />
      <LayoutTab label="d-border" box="w-[110px]" />
      <button type="button" aria-label="New layout" className="ml-[5px] flex h-6 w-8 items-center justify-center rounded-tl-xl rounded-br-xl border border-[#707070] bg-[#4c4c4c]">
        <svg viewBox="0 0 14 14" className="size-3.5"><path d="M7 1v12M1 7h12" stroke="#bdbdbd" strokeWidth={2.600} /></svg>
      </button>
    </nav>
    <div className="ml-auto flex">
      <Cell><span className="w-[210px] pr-2 text-right">202.1808, 2.4470</span></Cell>
      <Cell><button type="button" className="w-[72px] text-center">MODEL</button></Cell>
      <Cell><SBtn name="grid" /><Drop wide /></Cell>
      <Cell><SBtn name="ortho" /><SBtn name="polar" /><Drop wide /><SBtn name="iso" /><Drop /></Cell>
      <Cell joined><SBtn name="otrack" /><SBtn name="osnap" /><Drop wide /></Cell>
      <Cell joined><SBtn name="lineweight" /></Cell>
      <Cell><SBtn name="anno" /><SBtn name="annoauto" /><SBtn name="annoscale" /><button type="button" className="w-7 text-right">1:1</button><Drop /></Cell>
      <Cell><SBtn name="plus" /></Cell>
      <Cell><SBtn name="units" /><button type="button" className="w-[86px] text-center">Decimal</button><Drop wide /></Cell>
      <Cell><SBtn name="quickprops" narrow /></Cell>
      <Cell><SBtn name="menu" narrow /></Cell>
    </div>
  </footer>
);

const Defs = () => (
  <svg className="absolute size-0" aria-hidden="true">
    <defs>
      <linearGradient id="gw" x1="0" y1="0" x2="0.4" y2="1"><stop offset="0" stopColor="#ffffff" /><stop offset="1" stopColor="#ccd0db" /></linearGradient>
      <linearGradient id="gb" x1="0" y1="0" x2="0.3" y2="1"><stop offset="0" stopColor="#cfe0fb" /><stop offset="1" stopColor="#7da7e6" /></linearGradient>
      <linearGradient id="gs" x1="0" y1="0" x2="0" y2="1"><stop offset="0" stopColor="#a5d8f5" /><stop offset="1" stopColor="#3f90c4" /></linearGradient>
      <linearGradient id="gg" x1="0" y1="0" x2="1" y2="1"><stop offset="0" stopColor="#7f7f82" /><stop offset="1" stopColor="#c9cbd1" /></linearGradient>
      <linearGradient id="gc" x1="0" y1="0" x2="1" y2="0"><stop offset="0" stopColor="#ffffff" /><stop offset="0.500" stopColor="#b9bdc7" /><stop offset="1" stopColor="#f0f1f4" /></linearGradient>
      <linearGradient id="gy" x1="0" y1="0" x2="0" y2="1"><stop offset="0" stopColor="#fff7c8" /><stop offset="1" stopColor="#f4cf5c" /></linearGradient>
      <linearGradient id="tab1" x1="0" y1="0" x2="0" y2="1"><stop offset="0" stopColor="#858585" /><stop offset="1" stopColor="#5b5b5b" /></linearGradient>
      <linearGradient id="tab2" x1="0" y1="0" x2="0" y2="1"><stop offset="0" stopColor="#626262" /><stop offset="1" stopColor="#4c4c4c" /></linearGradient>
      <linearGradient id="tab3" x1="0" y1="0" x2="0" y2="1"><stop offset="0" stopColor="#5b5b5b" /><stop offset="1" stopColor="#8c8c8c" /></linearGradient>
      <filter id="glow" x="-50%" y="-50%" width="200%" height="200%"><feDropShadow dx="0" dy="0" stdDeviation="1.600" floodColor="#1673ff" /></filter>
    </defs>
  </svg>
);

const specks: [number, string][] = [[20, B], [137, "#999"], [240, K], [300, B], [323, B], [340, B], [354, B], [373, B], [390, B], [414, K], [484, B], [518, K], [562, "#e2c21a"], [587, "#c8701c"], [627, "#999"], [650, "#999"], [686, B], [805, "#88a"], [826, "#88a"], [873, K], [897, B], [906, B], [934, K], [944, K], [966, B], [976, B], [1008, "#7f96b5"]];

export default function App() {
  return (
    <div className="relative flex min-h-screen bg-[#5b5b5b] font-['Open_Sans','Noto_Sans',sans-serif]">
      <Defs />
      <div className="w-2.5 shrink-0 border-r border-white bg-[#15140f]" />
      <div className="flex min-w-0 flex-1 flex-col">
        <MenuBar />
        <FileTabs />
        <Toolbars />
        <Workspace />
        <Footer />
      </div>
      <div className="w-0.5 shrink-0 border-l border-white bg-[#1a2430]" />
      <div className="absolute top-0 left-px h-2 w-[1038px] border-r border-b border-[#333] bg-[#5c5c5c]">
        <svg viewBox="0 0 1038 2" className="h-0.5 w-full">
          {specks.map(([x, c]) => (
            <rect key={x} x={x - 3} y={0} width={5} height={2} fill={c} />
          ))}
        </svg>
      </div>
    </div>
  );
}
